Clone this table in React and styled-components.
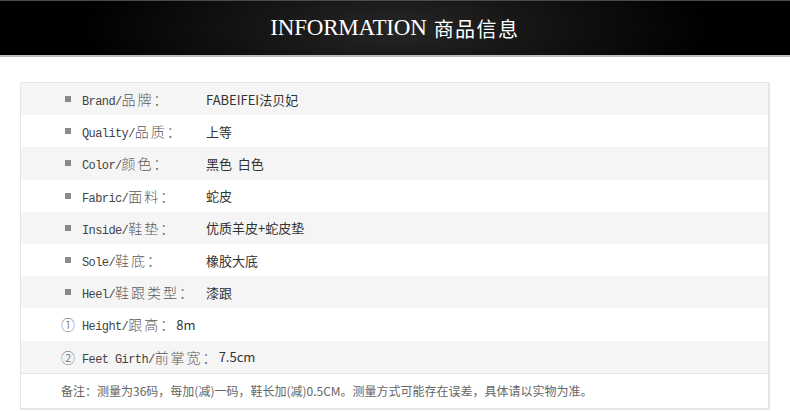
import React from "react";
import styled, { createGlobalStyle } from "styled-components";

const GlobalStyle = createGlobalStyle`
  body {
    margin: 0;
    background: #fff;
    font-family: "Noto Sans CJK SC", "Noto Sans", sans-serif;
  }
`;

const Page = styled.div`
  width: 790px;
`;

const Banner = styled.div`
  height: 54px;
  border-top: 1px solid #4a4a4a;
  border-bottom: 2px solid #bdbdbd;
  background: radial-gradient(ellipse 40% 170% at 50% 50%, #262626 0%, #151515 45%, #000 100%);
  display: flex;
  align-items: center;
  justify-content: center;
  color: #fff;
  font-family: "Liberation Serif", serif;
  font-size: 23px;
  letter-spacing: -0.2px;
`;

const BannerZh = styled.span`
  font-family: "Noto Sans CJK SC", sans-serif;
  font-size: 20px;
  letter-spacing: 1.5px;
  margin-left: 7px;
`;

const Table = styled.div`
  margin: 25px 20px 0 20px;
  border: 1px solid #e6e6e6;
  border-right-width: 2px;
  border-bottom-width: 2px;
`;

const Row = styled.div`
  height: 32.2px;
  display: flex;
  align-items: center;
  background: ${(p) => (p.$shaded ? "#f5f5f5" : "#fff")};
  padding-left: ${(p) => (p.$numbered ? "40px" : "44px")};
`;

const Bullet = styled.span`
  width: 6px;
  height: 6px;
  background: #8a8a8a;
  margin-right: 11px;
  flex: none;
`;

const Circled = styled.span`
  width: 21px;
  color: #666;
  font-size: 14px;
  font-weight: 300;
`;

const Label = styled.span`
  width: ${(p) => (p.$auto ? "auto" : "124px")};
  flex: none;
  color: #5a5a5a;
  font-size: 14px;
  font-weight: 300;
  letter-spacing: 2px;
`;

const Latin = styled.span`
  font-family: "Liberation Mono", monospace;
  font-size: 12px;
  letter-spacing: -0.6px;
  color: #444;
`;

const Value = styled.span`
  color: #333;
  font-size: 13px;
  white-space: pre;
`;

const Note = styled.div`
  height: 34px;
  border-top: 1px solid #e6e6e6;
  display: flex;
  align-items: center;
  padding-left: 40px;
  color: #666;
  font-size: 12px;
`;

const specs = [
  { en: "Brand/", zh: "品牌：", value: "FABEIFEI法贝妃" },
  { en: "Quality/", zh: "品质：", value: "上等" },
  { en: "Color/", zh: "颜色：", value: "黑色  白色" },
  { en: "Fabric/", zh: "面料：", value: "蛇皮" },
  { en: "Inside/", zh: "鞋垫：", value: "优质羊皮+蛇皮垫" },
  { en: "Sole/", zh: "鞋底：", value: "橡胶大底" },
  { en: "Heel/", zh: "鞋跟类型：", value: "漆跟" },
];

const sizes = [
  { mark: "①", en: "Height/", zh: "跟高：", value: "8m" },
  { mark: "②", en: "Feet Girth/", zh: "前掌宽：", value: "7.5cm" },
];

const App = () => {
  return (
    <Page>
      <GlobalStyle />
      <Banner>
        INFORMATION<BannerZh>商品信息</BannerZh>
      </Banner>
      <Table>
        {specs.map((s, i) => (
          <Row key={s.en} $shaded={i % 2 === 0}>
            <Bullet />
            <Label>
              <Latin>{s.en}</Latin>
              {s.zh}
            </Label>
            <Value>{s.value}</Value>
          </Row>
        ))}
        {sizes.map((s, i) => (
          <Row key={s.en} $numbered $shaded={i % 2 === 1}>
            <Circled>{s.mark}</Circled>
            <Label $auto>
              <Latin>{s.en}</Latin>
              {s.zh}
            </Label>
            <Value>{s.value}</Value>
          </Row>
        ))}
        <Note>
          备注：测量为36码，每加(减)一码，鞋长加(减)0.5CM。测量方式可能存在误差，具体请以实物为准。
        </Note>
      </Table>
    </Page>
  );
};

export default App;
